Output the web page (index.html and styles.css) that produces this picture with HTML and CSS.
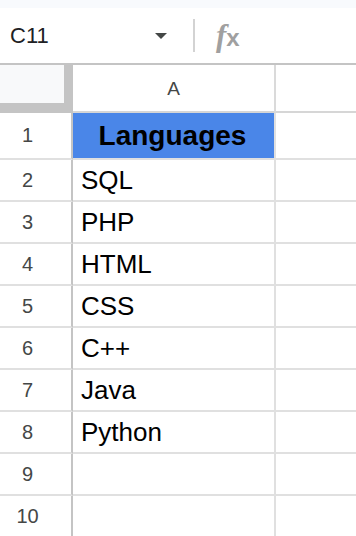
FILE: index.html
```html
<!DOCTYPE html>
<html>
<head>
<meta charset="utf-8">
<link rel="stylesheet" href="styles.css">
</head>
<body>
<div class="topstrip"></div>
<div class="formulabar">
  <div class="namebox">
    <span class="ref">C11</span>
    <span class="caret"></span>
  </div>
  <div class="sep"></div>
  <div class="fx"><span class="f">f</span><span class="x">x</span></div>
</div>
<div class="sheet">
  <div class="corner"></div>
  <div class="colhead">A</div>
  <div class="colhead last"></div>

  <div class="rownum first">1</div>
  <div class="cell first header">Languages</div>
  <div class="cell first last"></div>

  <div class="rownum">2</div><div class="cell">SQL</div><div class="cell last"></div>
  <div class="rownum">3</div><div class="cell">PHP</div><div class="cell last"></div>
  <div class="rownum">4</div><div class="cell">HTML</div><div class="cell last"></div>
  <div class="rownum">5</div><div class="cell">CSS</div><div class="cell last"></div>
  <div class="rownum">6</div><div class="cell">C++</div><div class="cell last"></div>
  <div class="rownum">7</div><div class="cell">Java</div><div class="cell last"></div>
  <div class="rownum">8</div><div class="cell">Python</div><div class="cell last"></div>
  <div class="rownum">9</div><div class="cell"></div><div class="cell last"></div>
  <div class="rownum">10</div><div class="cell"></div><div class="cell last"></div>
</div>
</body>
</html>
```

FILE: styles.css
```css
html, body {
  margin: 0;
  padding: 0;
  background: #ffffff;
  font-family: "Liberation Sans", Arial, sans-serif;
  overflow: hidden;
}

.topstrip {
  height: 8px;
  background: #f8fafd;
}

.formulabar {
  height: 55px;
  display: flex;
  align-items: center;
  border-bottom: 2px solid #c4c4c4;
}

.namebox {
  width: 193px;
  display: flex;
  align-items: center;
  box-sizing: border-box;
  padding-left: 10px;
}

.ref {
  font-size: 22px;
  color: #202124;
  line-height: 1;
  padding-top: 1px;
  width: 145px;
}

.caret {
  width: 0;
  height: 0;
  border-left: 6px solid transparent;
  border-right: 6px solid transparent;
  border-top: 6px solid #444746;
}

.sep {
  width: 2px;
  height: 33px;
  background: #d3d3d3;
}

.fx {
  margin-left: 21px;
  font-family: "Liberation Serif", "Times New Roman", serif;
  color: #a0a0a0;
  font-size: 31px;
  line-height: 1;
  font-weight: bold;
  display: flex;
  align-items: baseline;
  padding-bottom: 1px;
}

.fx .f {
  font-style: italic;
}

.fx .x {
  font-family: "Liberation Sans", Arial, sans-serif;
  font-size: 24px;
  margin-left: 0px;
}

.sheet {
  display: grid;
  grid-template-columns: 73px 203px 1fr;
  grid-auto-rows: 42px;
  grid-template-rows: 48px 47px;
}

.corner {
  box-sizing: border-box;
  background: #f8f9fa;
  border-right: 9px solid #c4c4c4;
  border-bottom: 10px solid #c4c4c4;
}

.colhead {
  box-sizing: border-box;
  border-right: 2px solid #dadada;
  border-bottom: 2px solid #d6d6d6;
  display: flex;
  align-items: center;
  justify-content: center;
  font-size: 19px;
  color: #444746;
  padding-top: 2px;
}

.rownum {
  box-sizing: border-box;
  border-right: 2px solid #c4c4c4;
  border-bottom: 2px solid #e0e0e0;
  display: flex;
  align-items: center;
  justify-content: center;
  padding-right: 16px;
  font-size: 20px;
  color: #444746;
}

.cell {
  box-sizing: border-box;
  border-right: 2px solid #e0e0e0;
  border-bottom: 2px solid #e0e0e0;
  display: flex;
  align-items: center;
  padding-left: 8px;
  font-size: 26px;
  color: #000000;
  white-space: nowrap;
}

.cell.last,
.colhead.last {
  border-right: none;
}

.cell.header {
  background: #4a86e8;
  font-weight: bold;
  font-size: 28px;
  justify-content: center;
  padding-left: 0;
  padding-right: 2px;
}
```
